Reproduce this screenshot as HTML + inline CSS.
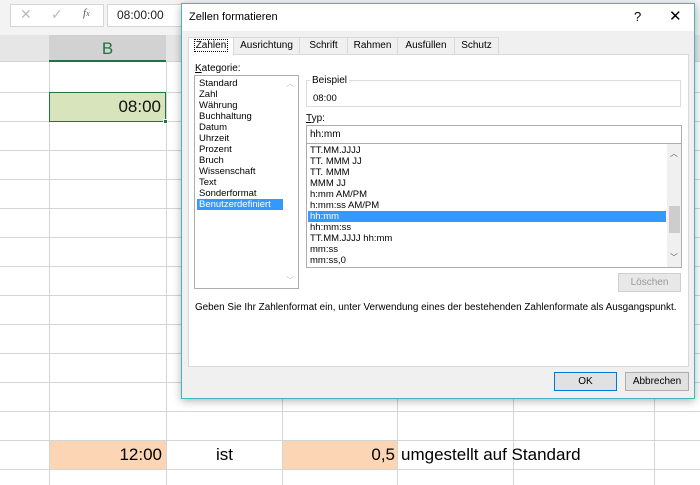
<!DOCTYPE html>
<html><head><style>
*{margin:0;padding:0;box-sizing:border-box}
body{width:700px;height:485px;overflow:hidden;background:#fff;font-family:"Liberation Sans",sans-serif;position:relative}
.a{position:absolute}
.vl{position:absolute;top:62px;bottom:0;width:1px;background:#d4d4d4}
.hl{position:absolute;left:0;right:0;height:1px;background:#d4d4d4}
.d{font-size:10px;color:#000}
.tab{position:absolute;top:37px;height:17px;border:1px solid #d9d9d9;border-bottom:none;background:#f0f0f0;font-size:10px;text-align:center;line-height:15px}
.li{height:11px;line-height:11px;font-size:9.5px;padding-left:2px;white-space:nowrap}
</style></head><body>
<div class="a" style="left:0;top:0;width:700px;height:35px;background:#f3f3f3"></div>
<div class="a" style="left:10px;top:4px;width:94px;height:23px;background:#fff;border:1px solid #d6d6d6"></div>
<div class="a" style="left:20px;top:6px;font-size:14px;color:#bbb">✕</div>
<div class="a" style="left:51px;top:6px;font-size:14px;color:#bbb">✓</div>
<div class="a" style="left:83px;top:7px;font-size:11px;font-style:italic;font-family:'Liberation Serif',serif;color:#555">f<span style="font-size:8px">x</span></div>
<div class="a" style="left:107px;top:4px;width:80px;height:23px;background:#fff;border:1px solid #d6d6d6;font-size:12px;line-height:21px;padding-left:9px;color:#222">08:00:00</div>
<div class="a" style="left:0;top:35px;width:700px;height:27px;background:#e6e6e6;border-bottom:1px solid #d4d4d4"></div>
<div class="a" style="left:49px;top:35px;width:117px;height:27px;background:#d2d2d2;border-bottom:2px solid #217346;text-align:center;font-size:17px;line-height:27px;color:#217346">B</div>
<div class="vl" style="left:49px"></div><div class="vl" style="left:166px"></div><div class="vl" style="left:282px"></div><div class="vl" style="left:397px"></div><div class="vl" style="left:513px"></div><div class="vl" style="left:654px"></div>
<div class="hl" style="top:92px"></div><div class="hl" style="top:121px"></div><div class="hl" style="top:150px"></div><div class="hl" style="top:179px"></div><div class="hl" style="top:208px"></div><div class="hl" style="top:237px"></div><div class="hl" style="top:266px"></div><div class="hl" style="top:295px"></div><div class="hl" style="top:324px"></div><div class="hl" style="top:353px"></div><div class="hl" style="top:382px"></div><div class="hl" style="top:411px"></div><div class="hl" style="top:440px"></div><div class="hl" style="top:469px"></div>
<div class="a" style="left:49px;top:92px;width:117px;height:30px;background:#d8e4bc;border:1px solid #217346;font-size:17px;text-align:right;padding-right:4px;line-height:28px;color:#111">08:00</div>
<div class="a" style="left:163px;top:119px;width:5px;height:5px;background:#217346;border:1px solid #fff"></div>
<div class="a" style="left:50px;top:441px;width:116px;height:28px;background:#fcd5b4;font-size:17px;text-align:right;padding-right:4px;line-height:28px">12:00</div>
<div class="a" style="left:167px;top:441px;width:115px;height:28px;font-size:17px;text-align:center;line-height:28px">ist</div>
<div class="a" style="left:283px;top:441px;width:114px;height:28px;background:#fcd5b4;font-size:17px;text-align:right;padding-right:2px;line-height:28px">0,5</div>
<div class="a" style="left:401px;top:441px;font-size:17px;line-height:28px">umgestellt auf Standard</div>

<div class="a" style="left:181px;top:3px;width:514px;height:396px;background:#f0f0f0;border:1px solid #3fb8c0;box-shadow:0 2px 8px rgba(0,0,0,.3)">
<div class="a" style="left:0;top:0;width:512px;height:27px;background:#fff"></div>
<div class="a d" style="left:7px;top:7px;font-size:11px">Zellen formatieren</div>
<div class="a" style="left:452px;top:5px;font-size:13px">?</div>
<div class="a" style="left:487px;top:3px;font-size:15px">✕</div>
<div class="a" style="left:6px;top:50px;width:501px;height:313px;background:#fff;border:1px solid #d9d9d9"></div>
</div>
<div class="tab" style="left:188px;width:46px;background:#fff;height:18px"><span style="outline:1px dotted #000;padding:0 1px">Zahlen</span></div>
<div class="tab" style="left:233px;width:67px">Ausrichtung</div>
<div class="tab" style="left:299px;width:49px">Schrift</div>
<div class="tab" style="left:347px;width:51px">Rahmen</div>
<div class="tab" style="left:397px;width:58px">Ausfüllen</div>
<div class="tab" style="left:454px;width:45px">Schutz</div>
<div class="a d" style="left:195px;top:63px"><u>K</u>ategorie:</div>
<div class="a" style="left:194px;top:75px;width:105px;height:214px;border:1px solid #adadad;background:#fff;padding-top:2px;padding-left:2px">
<div class="li">Standard</div><div class="li">Zahl</div><div class="li">Währung</div><div class="li">Buchhaltung</div><div class="li">Datum</div><div class="li">Uhrzeit</div><div class="li">Prozent</div><div class="li">Bruch</div><div class="li">Wissenschaft</div><div class="li">Text</div><div class="li">Sonderformat</div><div class="li" style="background:#3399ff;color:#fff;width:86px">Benutzerdefiniert</div>
<div class="a" style="right:4px;top:2px;font-size:8px;color:#bbb">︿</div>
<div class="a" style="right:4px;bottom:2px;font-size:8px;color:#bbb">﹀</div>
</div>
<div class="a" style="left:306px;top:80px;width:375px;height:27px;border:1px solid #dcdcdc"></div>
<div class="a d" style="left:310px;top:75px;background:#fff;padding:0 2px">Beispiel</div>
<div class="a" style="left:313px;top:93px;font-size:9.5px">08:00</div>
<div class="a d" style="left:306px;top:113px"><u>T</u>yp:</div>
<div class="a" style="left:306px;top:125px;width:376px;height:19px;border:1px solid #adadad;background:#fff;font-size:10px;line-height:17px;padding-left:3px">hh:mm</div>
<div class="a" style="left:306px;top:143px;width:376px;height:125px;border:1px solid #adadad;background:#fff;padding-top:1px;padding-left:1px">
<div class="li">TT.MM.JJJJ</div><div class="li">TT. MMM JJ</div><div class="li">TT. MMM</div><div class="li">MMM JJ</div><div class="li">h:mm AM/PM</div><div class="li">h:mm:ss AM/PM</div><div class="li" style="background:#3399ff;color:#fff;width:358px">hh:mm</div><div class="li">hh:mm:ss</div><div class="li">TT.MM.JJJJ hh:mm</div><div class="li">mm:ss</div><div class="li">mm:ss,0</div>
<div class="a" style="left:360px;top:0;width:14px;height:123px;background:#f0f0f0"></div>
<div class="a" style="left:362px;top:62px;width:11px;height:27px;background:#cdcdcd"></div>
<div class="a" style="left:363px;top:4px;font-size:8px;color:#555">︿</div>
<div class="a" style="left:363px;bottom:4px;font-size:8px;color:#555">﹀</div>
</div>
<div class="a" style="left:618px;top:273px;width:63px;height:19px;border:1px solid #cfcfcf;background:#e8e8e8;font-size:10px;text-align:center;line-height:17px;color:#999">Löschen</div>
<div class="a" style="left:195px;top:302px;font-size:9.9px">Geben Sie Ihr Zahlenformat ein, unter Verwendung eines der bestehenden Zahlenformate als Ausgangspunkt.</div>
<div class="a" style="left:554px;top:372px;width:63px;height:19px;border:1px solid #0078d7;background:#e1e1e1;font-size:10px;text-align:center;line-height:17px">OK</div>
<div class="a" style="left:625px;top:372px;width:64px;height:19px;border:1px solid #adadad;background:#e1e1e1;font-size:10px;text-align:center;line-height:17px">Abbrechen</div>
</body></html>
